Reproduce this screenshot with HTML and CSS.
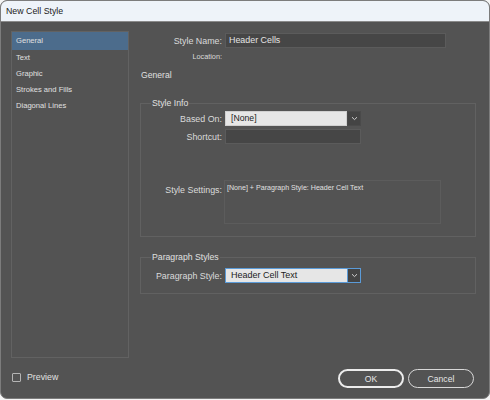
FILE: index.html
```html
<!DOCTYPE html>
<html>
<head>
<meta charset="utf-8">
<title>New Cell Style</title>
<link rel="stylesheet" href="styles.css">
</head>
<body>
<div class="window">
  <div class="titlebar">New Cell Style</div>
  <div class="main">
    <ul class="sidebar">
      <li class="item selected">General</li>
      <li class="item">Text</li>
      <li class="item">Graphic</li>
      <li class="item">Strokes and Fills</li>
      <li class="item">Diagonal Lines</li>
    </ul>
    <div class="content">
      <div class="row name-row">
        <span class="label">Style Name:</span>
        <div class="input wide">Header Cells</div>
      </div>
      <div class="row loc-row">
        <span class="label small">Location:</span>
      </div>
      <div class="heading">General</div>
      <fieldset class="group info">
        <legend>Style Info</legend>
        <div class="grid">
          <span class="label">Based On:</span>
          <div class="select">
            <div class="select-value">[None]</div>
            <div class="select-arrow"><svg width="7" height="5" viewBox="0 0 7 5"><path d="M1 1.2 L3.5 3.6 L6 1.2" fill="none" stroke="#cfcfcf" stroke-width="1"/></svg></div>
          </div>
          <span class="label">Shortcut:</span>
          <div class="input mid"></div>
          <span class="label settings-label">Style Settings:</span>
          <div class="settings">[None] + Paragraph Style: Header Cell Text</div>
        </div>
      </fieldset>
      <fieldset class="group para">
        <legend>Paragraph Styles</legend>
        <div class="grid">
          <span class="label">Paragraph Style:</span>
          <div class="select focused">
            <div class="select-value big">Header Cell Text</div>
            <div class="select-arrow"><svg width="7" height="5" viewBox="0 0 7 5"><path d="M1 1.2 L3.5 3.6 L6 1.2" fill="none" stroke="#cfcfcf" stroke-width="1"/></svg></div>
          </div>
        </div>
      </fieldset>
    </div>
  </div>
  <div class="footer">
    <label class="preview"><span class="checkbox"></span>Preview</label>
    <div class="buttons">
      <div class="button default">OK</div>
      <div class="button">Cancel</div>
    </div>
  </div>
</div>
</body>
</html>
```

FILE: styles.css
```css
html, body {
  margin: 0;
  padding: 0;
  background: #f4f4f4;
}
body {
  font-family: "Liberation Sans", Arial, sans-serif;
  color: #dcdcdc;
}
.window {
  width: 490px;
  height: 399px;
  box-sizing: border-box;
  background: #535353;
  border: 1px solid #7c7c7c;
  border-radius: 7px;
  overflow: hidden;
  display: flex;
  flex-direction: column;
}
.titlebar {
  height: 20px;
  line-height: 20px;
  background: #eef3f9;
  border-bottom: 1px solid #8a8a8a;
  color: #1a1a1a;
  font-size: 8.8px;
  padding-left: 5px;
}
.main {
  display: flex;
  gap: 11px;
  padding: 9px 13px 0 10px;
}
.sidebar {
  list-style: none;
  margin: 0;
  padding: 0;
  width: 118px;
  height: 327px;
  box-sizing: border-box;
  border: 1px solid #626262;
  flex: none;
}
.item {
  height: 16px;
  line-height: 16px;
  padding-left: 4px;
  font-size: 7.6px;
  color: #e0e0e0;
}
.item.selected {
  height: 18px;
  line-height: 18px;
  background: #4c6c8c;
}
.content {
  flex: 1;
  display: flex;
  flex-direction: column;
}
.row {
  display: flex;
  align-items: center;
  gap: 3px;
}
.label {
  width: 82px;
  text-align: right;
  font-size: 8.9px;
  color: #dadada;
  flex: none;
}
.label.small {
  font-size: 7.3px;
}
.name-row {
  margin-top: 2px;
}
.input {
  height: 15px;
  box-sizing: border-box;
  background: #464646;
  border: 1px solid #5b5b5b;
  font-size: 8.9px;
  line-height: 13px;
  padding-left: 3px;
  color: #e4e4e4;
}
.input.wide {
  width: 221px;
}
.input.mid {
  width: 136px;
}
.loc-row {
  margin-top: 3px;
  height: 10px;
}
.heading {
  margin-top: 8px;
  padding-left: 1px;
  height: 12px;
  line-height: 12px;
  font-size: 8.6px;
  color: #e0e0e0;
}
.group {
  margin: 0;
  padding: 0;
  border: 1px solid #616161;
  min-width: 0;
}
.group legend {
  margin-left: 10px;
  padding: 0 1px;
  font-size: 8.7px;
  line-height: 12px;
  color: #e0e0e0;
}
.info {
  margin-top: 16px;
  padding: 2px 0 12px;
}
.para {
  margin-top: 14px;
  padding: 5px 0 10px;
}
.grid {
  display: grid;
  grid-template-columns: 81px auto;
  column-gap: 3px;
  row-gap: 3px;
  justify-content: start;
  align-items: center;
}
.grid .label {
  width: auto;
}
.select {
  display: flex;
  width: 136px;
  height: 15px;
  box-sizing: border-box;
}
.select-value {
  flex: 1;
  background: #e6e6e6;
  border: 1px solid #d0d0d0;
  color: #1c1c1c;
  font-size: 8.7px;
  line-height: 13px;
  padding-left: 5px;
}
.select-value.big {
  font-size: 9px;
}
.select-arrow {
  width: 14px;
  flex: none;
  box-sizing: border-box;
  background: #444;
  border: 1px solid #4a4a4a;
  display: flex;
  align-items: center;
  justify-content: center;
}
.focused .select-value {
  border-color: #5b9bd8;
  border-right: none;
}
.focused .select-arrow {
  border-color: #5b9bd8;
}
.settings-label {
  align-self: start;
  margin-top: 38px;
}
.settings {
  align-self: start;
  margin-top: 33px;
  margin-left: -1px;
  width: 217px;
  height: 44px;
  box-sizing: border-box;
  border: 1px solid #5c5c5c;
  font-size: 7.1px;
  padding: 3px 2px;
  color: #e0e0e0;
}
.footer {
  display: flex;
  justify-content: space-between;
  align-items: flex-start;
  padding: 11px 15px 0 11px;
}
.preview {
  display: flex;
  align-items: center;
  gap: 6px;
  font-size: 8.8px;
  color: #e0e0e0;
  margin-top: 3px;
}
.checkbox {
  width: 9px;
  height: 9px;
  box-sizing: border-box;
  border: 1px solid #b4b4b4;
  border-radius: 1px;
}
.buttons {
  display: flex;
  gap: 4px;
}
.button {
  width: 66px;
  height: 19px;
  box-sizing: border-box;
  border: 1px solid #d8d8d8;
  border-radius: 10px;
  font-size: 8.6px;
  color: #e6e6e6;
  display: flex;
  align-items: center;
  justify-content: center;
}
.button.default {
  border: 2px solid #ececec;
}
```
